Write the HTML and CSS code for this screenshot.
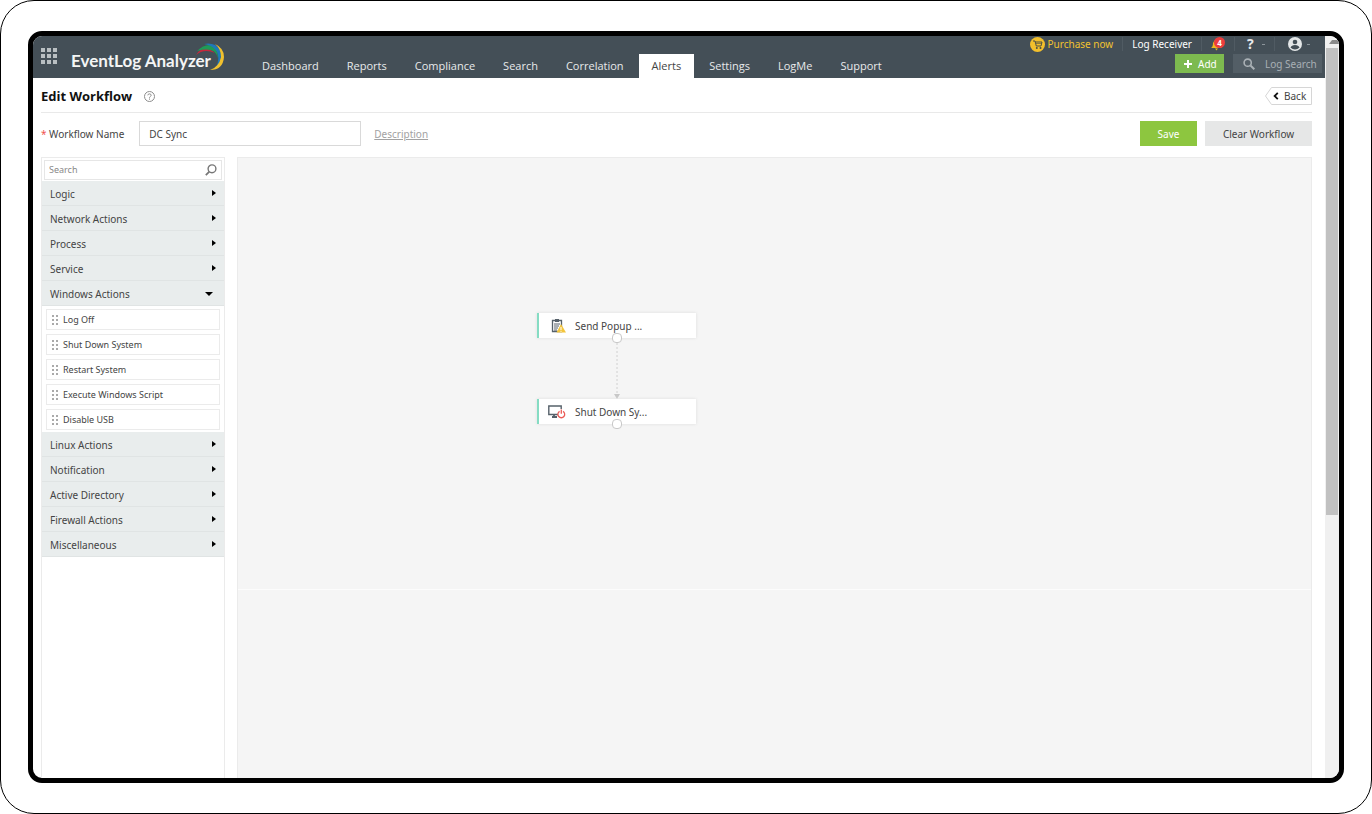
FILE: index.html
```html
<!DOCTYPE html>
<html lang="en">
<head>
<meta charset="utf-8">
<title>EventLog Analyzer - Edit Workflow</title>
<link rel="stylesheet" href="styles.css">
</head>
<body>
<div class="device">
<div class="screen">
<div class="page">

<header class="topbar">
	<button class="apps" aria-label="Apps">
		<svg width="16" height="16" viewBox="0 0 16 16" fill="#b9bfc2"><path d="M0 0h4v4H0zM6 0h4v4H6zM12 0h4v4h-4zM0 6h4v4H0zM6 6h4v4H6zM12 6h4v4h-4zM0 12h4v4H0zM6 12h4v4H6zM12 12h4v4h-4z"/></svg>
	</button>
	<a class="logo" href="#">EventLog Analyzer
		<svg class="swoosh" width="30" height="28" viewBox="0 0 30 28">
			<path d="M1 12Q8 0 20 10Q9 5 1 12z" fill="#c5283d"/>
			<path d="M2 8Q8 2 14 2Q23 4 23 15Q20 3 2 8z" fill="#1f9a57"/>
			<path d="M9 1Q20-1 25 7Q28 16 21 25Q25 16 22 9Q18 2 9 1z" fill="#1f78b8"/>
			<path d="M20 1Q29 5 29 14Q28 27 15 27Q24 24 26 14Q26 6 20 1z" fill="#f0c02e"/>
		</svg>
	</a>
	<nav class="tabs">
		<a href="#">Dashboard</a>
		<a href="#">Reports</a>
		<a href="#">Compliance</a>
		<a href="#">Search</a>
		<a href="#">Correlation</a>
		<a href="#" class="active">Alerts</a>
		<a href="#">Settings</a>
		<a href="#">LogMe</a>
		<a href="#">Support</a>
	</nav>
	<div class="tools">
		<div class="links">
			<a href="#" class="buy">
				<svg width="15" height="15" viewBox="0 0 15 15"><circle cx="7.500" cy="7.500" r="7.500" fill="#f2bf2c"/><path d="M3 4h2l1.300 5H11l1-4H5.300" fill="none" stroke="#4a4f45"/><path d="M6 6.500h5.500" stroke="#4a4f45" stroke-width=".6"/><circle cx="6.800" cy="11" r="1" fill="#4a4f45"/><circle cx="10.500" cy="11" r="1" fill="#4a4f45"/></svg>
				Purchase now</a>
			<a href="#" class="receiver">Log Receiver</a>
			<button class="bell" aria-label="Alerts, 4 new">
				<svg width="14" height="14" viewBox="0 0 14 14"><path d="M0 11Q2 10 2 6Q3 3 5 3Q9 3 9 7Q9 10 11 11z" fill="#f0b91f"/><path d="M4 11.500h3L5.500 13.500z" fill="#f0b91f"/></svg>
				<span class="count">4</span>
			</button>
			<button class="help-menu" aria-label="Help"><b>?</b><i></i></button>
			<button class="user-menu" aria-label="Account">
				<svg width="14" height="14" viewBox="0 0 14 14"><circle cx="7" cy="7" r="7" fill="#e4e7e8"/><circle cx="7" cy="5" r="2.300" fill="#444f57"/><path d="M2.500 10.500Q3.500 8 7 8t4.500 2.500Q9.500 12.500 7 12.500t-4.500-2z" fill="#444f57"/></svg>
				<i></i>
			</button>
		</div>
		<div class="actions">
			<button class="add">
				<svg width="8" height="8" viewBox="0 0 8 8"><path d="M4 0v8M0 4h8" stroke="#fff" stroke-width="2"/></svg>
				Add</button>
			<button class="log-search">
				<svg width="12" height="12" viewBox="0 0 12 12" fill="none" stroke="#a9b0b5"><circle cx="4.700" cy="4.700" r="3.600" stroke-width="1.600"/><path d="M7.500 7.500l3.800 3.800" stroke-width="2"/></svg>
				Log Search</button>
		</div>
	</div>
</header>

<main>
	<div class="title">
		<h1>Edit Workflow</h1>
		<svg width="11" height="11" viewBox="0 0 11 11" fill="none" stroke="#8c8c8c"><circle cx="5.500" cy="5.500" r="5"/><path d="M3.800 4.300Q3.900 2.900 5.500 2.900T7.200 4.300Q7.200 5 6.300 5.500T5.500 6.700M5.500 7.500v1.200"/></svg>
		<button class="back">
			<svg class="tag" width="47" height="18" viewBox="0 0 47 18"><path d="M6.500.5h40v17h-40L.5 9z" fill="#fff" stroke="#d6d6d6"/></svg>
			<svg width="6" height="8" viewBox="0 0 6 8"><path d="M4.800.8L1.600 4l3.200 3.200" fill="none" stroke="#111" stroke-width="1.800"/></svg>
			<span>Back</span>
		</button>
	</div>

	<form class="name-row">
		<label for="wf-name"><em>*</em> Workflow Name</label>
		<input type="text" id="wf-name" value="DC Sync">
		<a href="#">Description</a>
		<button type="button" class="save">Save</button>
		<button type="button" class="clear">Clear Workflow</button>
	</form>

	<div class="editor">
		<aside class="palette">
			<div class="search">
				<input type="text" placeholder="Search" aria-label="Search actions">
				<svg width="12" height="12" viewBox="0 0 12 12" fill="none" stroke="#777"><circle cx="7" cy="4.800" r="3.900" stroke-width="1.400"/><path d="M4.300 7.700L.8 11.200" stroke-width="1.800"/></svg>
			</div>
			<button class="group">Logic</button>
			<button class="group">Network Actions</button>
			<button class="group">Process</button>
			<button class="group">Service</button>
			<button class="group open">Windows Actions</button>
			<ul>
				<li>Log Off</li>
				<li>Shut Down System</li>
				<li>Restart System</li>
				<li>Execute Windows Script</li>
				<li>Disable USB</li>
			</ul>
			<button class="group">Linux Actions</button>
			<button class="group">Notification</button>
			<button class="group">Active Directory</button>
			<button class="group">Firewall Actions</button>
			<button class="group">Miscellaneous</button>
		</aside>

		<section class="canvas">
			<svg class="wire" width="8" height="60" viewBox="0 0 8 60"><path d="M4 0v55" stroke="#d0d0d0" stroke-dasharray="2 2"/><path d="M1 55h6l-3 5z" fill="#c8c8c8"/></svg>
			<div class="node popup">
				<svg width="18" height="14" viewBox="0 0 18 14"><path d="M4.500 1.500h9v11h-9z" fill="#fff" stroke="#56616a" stroke-width="1.300"/><path d="M7 0h4v3H7z" fill="#56616a"/><path d="M6 5h6M6 7h5M6 9h4M6 11h3" stroke="#56616a"/><path d="M13 5l5 8.500H8.500z" fill="#f3c53c"/><path d="M13 8v3M13 11.800v1" stroke="#fff"/></svg>
				<span>Send Popup ...</span>
			</div>
			<div class="node shutdown">
				<svg width="18" height="14" viewBox="0 0 18 14" fill="none"><path d="M10 9.500H.8V1h12.400v3" stroke="#56616a" stroke-width="1.400"/><path d="M4 12h5M6 10v2" stroke="#56616a" stroke-width="1.800"/><path d="M11.600 6.400a3.400 3.400 0 1 0 3.400 0M13.300 4.500v4.300" stroke="#ec5a55" stroke-width="1.300"/></svg>
				<span>Shut Down Sy...</span>
			</div>
		</section>
	</div>
</main>

</div>
<div class="scrollbar"><div class="thumb"></div></div>
</div>
</div>
</body>
</html>
```
FILE: styles.css
```css
* {
	box-sizing: border-box;
}
body {
	margin: 0;
	background: #fff;
	color: #444;
	font-family: "Noto Sans", "Open Sans", sans-serif;
	font-size: 10px;
	line-height: 16px;
}
button, input {
	font: inherit;
	color: inherit;
	border: 0;
	padding: 0;
	margin: 0;
	background: none;
}
a {
	color: inherit;
	text-decoration: none;
}
svg {
	flex: none;
}

/* device frame */
.device {
	height: 100vh;
	padding: 30px 27px;
	border: 1px solid #000;
	border-radius: 34px;
	display: flex;
}
.screen {
	flex: 1;
	display: flex;
	border: 5px solid #000;
	border-radius: 14px;
	overflow: hidden;
}
.page {
	flex: 1;
	display: flex;
	flex-direction: column;
}
.scrollbar {
	width: 14px;
	padding: 0 1px;
	background: #f0f0f0;
}
.scrollbar:before {
	content: "";
	display: block;
	width: 6px;
	margin: 4px 3px;
	border: 3px solid transparent;
	border-top: 0;
	border-bottom: 4px solid #8a8a8a;
}
.thumb {
	height: 63%;
	background: #c1c1c1;
}

/* top bar */
.topbar {
	display: flex;
	height: 42px;
	padding: 0 3px 0 8px;
	background: #444f57;
	color: #e8eaeb;
}
.apps {
	height: 16px;
	margin-top: 12px;
}
.logo {
	position: relative;
	width: 178px;
	margin-left: 14px;
	padding-top: 15px;
	font: bold 17px/20px Lato, sans-serif;
	color: #f4f5f5;
}
.swoosh {
	position: absolute;
	left: 124px;
	top: 7px;
}
.tabs {
	display: flex;
	align-items: flex-end;
	gap: 2px;
	font-family: "Open Sans", sans-serif;
	font-size: 11px;
}
.tabs a {
	padding: 4px 13px;
}
.tabs .active {
	background: #fff;
	color: #444;
}
.tools {
	margin-left: auto;
	display: flex;
	flex-direction: column;
	align-items: flex-end;
	gap: 2px;
}
.links {
	display: flex;
	align-items: center;
	height: 16px;
}
.links > * {
	display: flex;
	align-items: center;
	height: 14px;
	padding: 0 9px;
	border-right: 1px solid #505b63;
}
.links > :last-child {
	border: 0;
}
.links .buy {
	gap: 3px;
	color: #f2c230;
}
.links .receiver {
	color: #fff;
}
.links .bell {
	position: relative;
	width: 33px;
}
.count {
	position: absolute;
	left: 12px;
	top: 0;
	width: 11px;
	height: 11px;
	border-radius: 6px;
	background: #ee3d3d;
	color: #fff;
	font-weight: bold;
	font-size: 8px;
	line-height: 11px;
}
.links .help-menu {
	width: 40px;
	padding: 0 0 0 12px;
	gap: 8px;
	font-size: 14px;
}
.links .user-menu {
	width: 47px;
	padding: 0 0 0 13px;
	gap: 5px;
}
.links i {
	width: 3px;
	height: 1px;
	background: #8b949a;
}
.actions {
	display: flex;
	gap: 9px;
}
.actions button {
	display: flex;
	align-items: center;
	height: 19px;
}
.add {
	width: 49px;
	padding-left: 9px;
	gap: 6px;
	background: #7dba4f;
	color: #fff;
}
.log-search {
	width: 89px;
	padding-left: 10px;
	gap: 10px;
	background: #535e66;
	color: #a9b0b5;
}

/* content */
main {
	flex: 1;
	display: flex;
	flex-direction: column;
	padding: 0 13px 0 8px;
}
.title {
	display: flex;
	align-items: center;
	height: 35px;
	gap: 12px;
	padding-top: 2px;
	border-bottom: 1px solid #e9e9e9;
}
h1 {
	margin: 0;
	font-family: "Open Sans", sans-serif;
	font-size: 13px;
	line-height: 18px;
	color: #111;
}
.back {
	position: relative;
	display: flex;
	align-items: center;
	gap: 5px;
	width: 47px;
	height: 18px;
	margin-left: auto;
	padding-left: 8px;
}
.back > * {
	position: relative;
}
.back .tag {
	position: absolute;
	left: 0;
	top: 0;
}
.name-row {
	display: flex;
	align-items: center;
	margin: 8px 0 11px;
}
.name-row em {
	color: #f0544f;
	font-style: normal;
}
.name-row input {
	width: 222px;
	height: 25px;
	margin: 0 13px 0 15px;
	padding: 0 9px;
	border: 1px solid #d9d9d9;
}
.name-row a {
	color: #a2a2a2;
	text-decoration: underline;
}
.name-row button {
	height: 25px;
}
.save {
	width: 57px;
	margin-left: auto;
	background: #8dc63f;
	color: #fff;
}
.clear {
	width: 107px;
	margin-left: 8px;
	background: #e6e7e7;
}
.editor {
	flex: 1;
	display: flex;
	gap: 12px;
}

/* action list */
.palette {
	width: 184px;
	border: 1px solid #ebebeb;
	border-bottom: 0;
}
.search {
	display: flex;
	align-items: center;
	height: 20px;
	margin: 2px 2px 1px;
	padding: 0 4px;
	border: 1px solid #e6e6e6;
}
.search input {
	flex: 1;
	min-width: 0;
	font-size: 9px;
}
.search input::placeholder {
	color: #888;
}
.group {
	display: flex;
	align-items: center;
	justify-content: space-between;
	width: 100%;
	height: 25px;
	padding: 1px 8px 0;
	background: #e9eded;
	border-bottom: 1px solid #e0e4e4;
}
.group:after {
	content: "";
	margin-bottom: 2px;
	border: 3px solid transparent;
	border-left: 4px solid #000;
	border-right: 0;
}
.group.open:after {
	margin: 0 3px 0 0;
	border: 4px solid transparent;
	border-top: 4px solid #000;
	border-bottom: 0;
}
.palette ul {
	display: flex;
	flex-direction: column;
	gap: 4px;
	margin: 0;
	padding: 3px 4px 2px;
	list-style: none;
}
.palette li {
	display: flex;
	align-items: center;
	gap: 5px;
	height: 21px;
	padding: 0 5px;
	border: 1px solid #ebebeb;
	font-size: 9px;
}
.palette li:before {
	content: "";
	width: 6px;
	height: 10px;
	background: linear-gradient(90deg, transparent 2px, #fff 2px, #fff 4px, transparent 4px), repeating-linear-gradient(#aaa 0, #aaa 2px, #fff 2px, #fff 4px);
}

/* drawing area */
.canvas {
	flex: 1;
	position: relative;
	border: 1px solid #ebebeb;
	border-bottom: 0;
	background: linear-gradient(#fcfcfc, #fcfcfc) 0 431px / 100% 1px no-repeat #f5f5f5;
}
.node {
	position: absolute;
	left: 299px;
	display: flex;
	align-items: center;
	gap: 9px;
	width: 159px;
	height: 25px;
	padding: 1px 9px 0;
	border-left: 2px solid #85dcc3;
	background: #fff;
	box-shadow: 0 0 3px #ddd;
}
.node:after {
	content: "";
	position: absolute;
	left: 73px;
	bottom: -5px;
	width: 8px;
	height: 8px;
	border: 1px solid #c8c8c8;
	border-radius: 4px;
	background: #fff;
}
.popup {
	top: 155px;
}
.shutdown {
	top: 241px;
}
.wire {
	position: absolute;
	left: 375px;
	top: 181px;
}
```
